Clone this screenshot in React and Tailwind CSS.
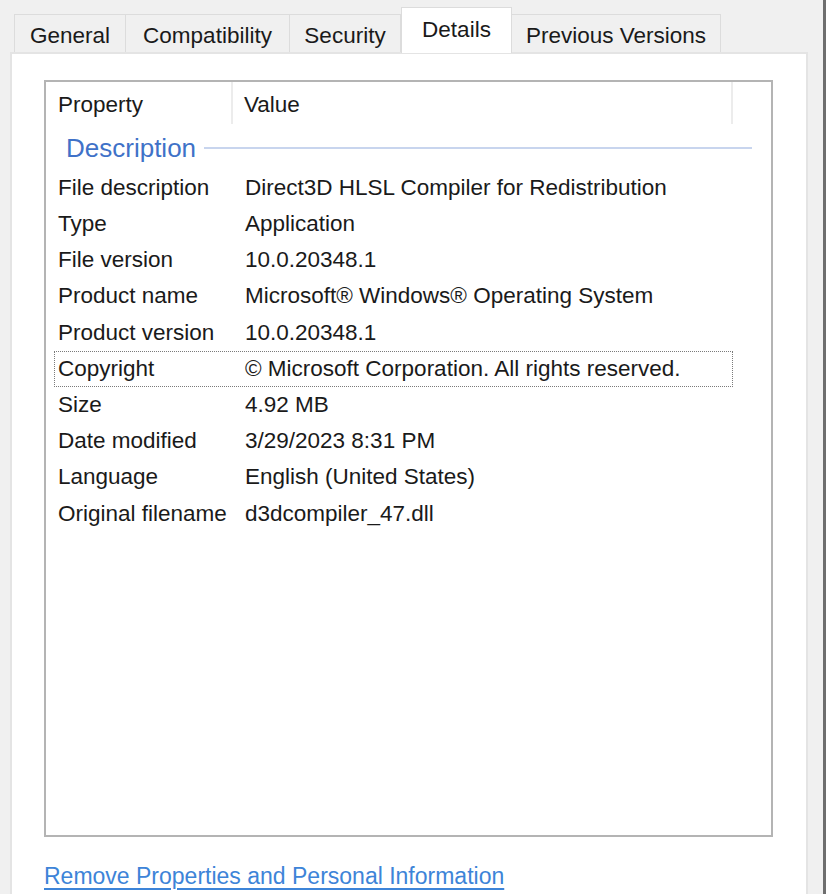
import React from "react";

const rows = [
  ["File description", "Direct3D HLSL Compiler for Redistribution"],
  ["Type", "Application"],
  ["File version", "10.0.20348.1"],
  ["Product name", "Microsoft® Windows® Operating System"],
  ["Product version", "10.0.20348.1"],
  ["Copyright", "© Microsoft Corporation. All rights reserved."],
  ["Size", "4.92 MB"],
  ["Date modified", "3/29/2023 8:31 PM"],
  ["Language", "English (United States)"],
  ["Original filename", "d3dcompiler_47.dll"],
];

function Tab({ label, w, selected }) {
  if (selected) {
    return (
      <div
        className={`relative z-10 -mt-[6px] h-[46px] flex items-start justify-center pt-[11px] bg-white border border-b-0 border-[#dcdcdc] ${w}`}
      >
        <span>{label}</span>
      </div>
    );
  }
  return (
    <div
      className={`h-[39px] flex items-start justify-center pt-[10px] bg-[#f0f0f0] border border-b-0 border-[#dcdcdc] -ml-px first:ml-0 ${w}`}
    >
      <span>{label}</span>
    </div>
  );
}

export default function App() {
  return (
    <div
      className="w-[826px] h-[894px] bg-[#f0f0f0] border-r-[3px] border-[#6e6e6e] flex flex-col overflow-hidden text-[#1a1a1a] text-[22.5px] leading-none"
      style={{ fontFamily: '"Liberation Sans", Arial, sans-serif' }}
    >
      <div className="flex items-end pl-[14px] pt-[13px]">
        <Tab label="General" w="w-[112px]" />
        <Tab label="Compatibility" w="w-[165px]" />
        <Tab label="Security" w="w-[112px]" />
        <Tab label="Details" w="w-[111px]" selected />
        <Tab label="Previous Versions" w="w-[210px]" />
      </div>
      <div className="relative -mt-px ml-[10px] w-[798px] flex-1 bg-white border-2 border-b-0 border-[#e4e4e4] pl-[32px] pt-[26px] flex flex-col">
        <div className="w-[729px] h-[757px] border-2 border-[#b4b4b4] bg-white flex flex-col">
          <div className="h-[44px] flex items-start">
            <div className="w-[187px] h-[42px] pl-[12px] pt-[5px] flex items-center border-r-2 border-[#ececec]">
              Property
            </div>
            <div className="w-[500px] h-[42px] pl-[11px] pt-[5px] flex items-center border-r-2 border-[#ececec]">
              Value
            </div>
          </div>
          <div className="h-[44px] flex items-center pl-[20px] pr-[19px]">
            <span className="text-[26px] text-[#3f72c8]">Description</span>
            <div className="flex-1 ml-[8px] h-[2px] bg-[#c8d5ee]"></div>
          </div>
          {rows.map(([k, v]) => {
            const focused = k === "Copyright";
            return (
              <div key={k} className="h-[36.2px] flex items-stretch">
                <div
                  className={`flex items-center ${
                    focused
                      ? "ml-[8px] w-[679px] border border-dotted border-[#7a7a7a]"
                      : "ml-[8px] w-[679px] border border-transparent"
                  }`}
                >
                  <div className="w-[190px] pl-[3px] whitespace-nowrap">{k}</div>
                  <div className="whitespace-nowrap">{v}</div>
                </div>
              </div>
            );
          })}
        </div>
        <div className="mt-[28px]">
          <span className="text-[23px] text-[#3d84d8] underline underline-offset-[4px] decoration-[2px]">
            Remove Properties and Personal Information
          </span>
        </div>
      </div>
    </div>
  );
}
